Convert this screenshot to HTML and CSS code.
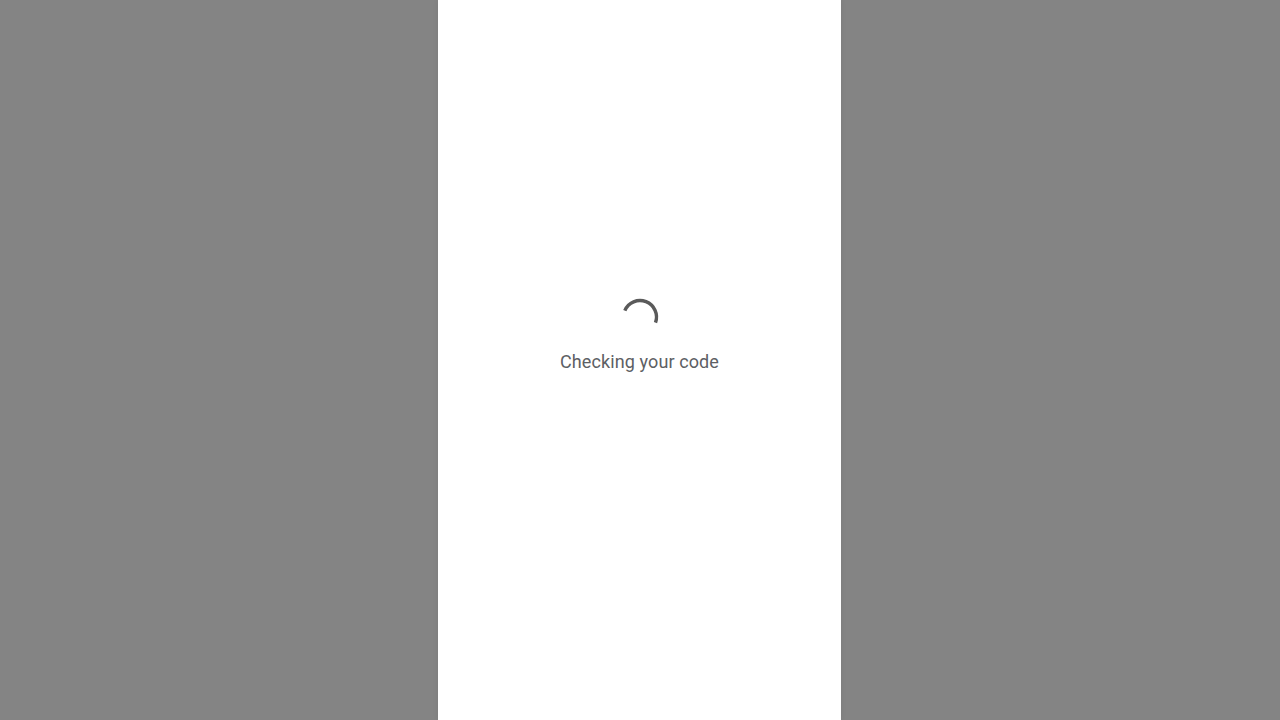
FILE: index.html
```html
<!DOCTYPE html>
<html lang="en">
<head>
<meta charset="utf-8">
<title>Checking your code</title>
<link rel="stylesheet" href="styles.css">
</head>
<body>
  <main class="panel">
    <div class="loader">
      <svg class="spinner" width="40" height="40" viewBox="0 0 40 40" aria-hidden="true">
        <path d="M4.81 13.55 A16.5 16.5 0 0 1 35.5 25.64" fill="none" stroke="#5a5a5a" stroke-width="3.4" stroke-linecap="butt"/>
      </svg>
      <p class="status">Checking your code</p>
    </div>
  </main>
</body>
</html>
```
FILE: styles.css
```css
html, body {
  margin: 0;
  padding: 0;
  height: 100%;
}
body {
  background: #848484;
  display: flex;
  justify-content: center;
  padding-right: 1px;
  box-sizing: border-box;
  font-family: Roboto, "Noto Sans", Arial, sans-serif;
  overflow: hidden;
}
.panel {
  width: 403px;
  height: 720px;
  background: #ffffff;
  box-shadow: 0 0 6px rgba(0, 0, 0, 0.06);
  display: flex;
  flex-direction: column;
  align-items: center;
  padding-top: 297px;
  box-sizing: border-box;
}
.loader {
  display: flex;
  flex-direction: column;
  align-items: center;
  gap: 13px;
}
.spinner {
  display: block;
}
.status {
  margin: 0;
  font-size: 18px;
  line-height: 24px;
  color: #5d6064;
  letter-spacing: 0.1px;
}
```
